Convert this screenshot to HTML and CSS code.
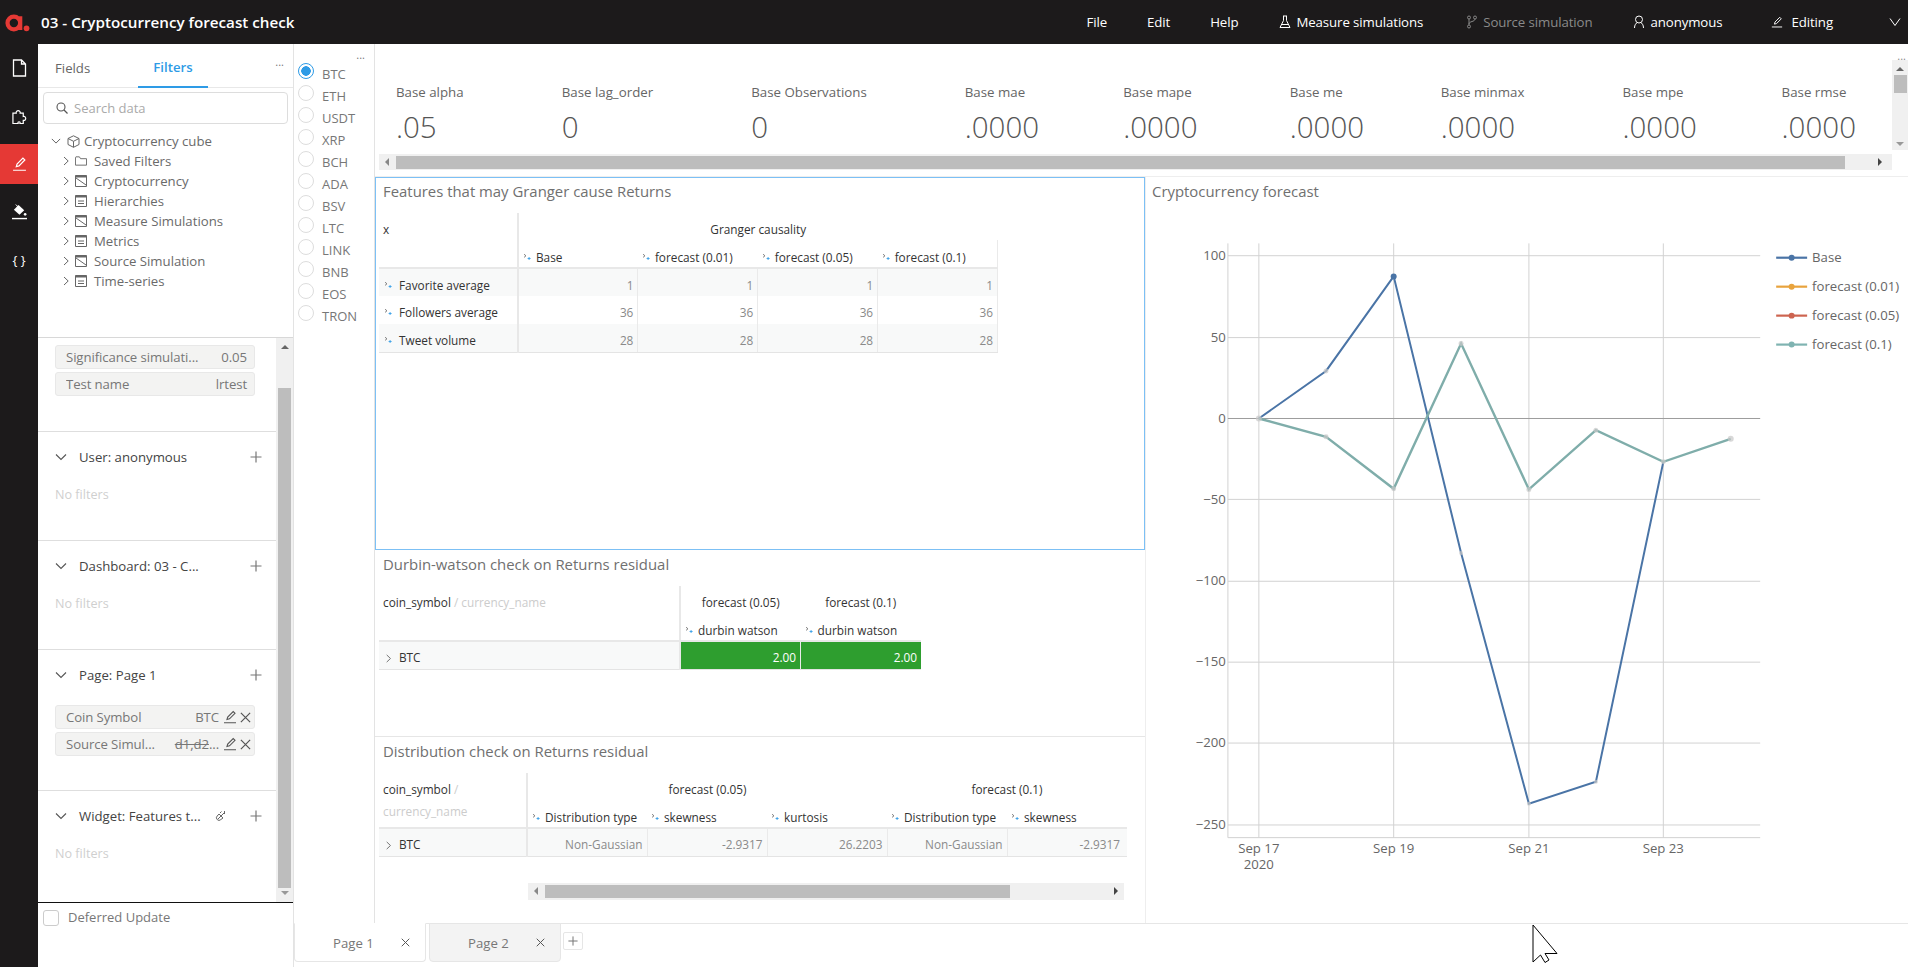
FILE: index.html
```html
<!DOCTYPE html>
<html lang="en">
<head>
<meta charset="utf-8">
<title>03 - Cryptocurrency forecast check</title>
<link rel="stylesheet" href="styles.css">
</head>
<body>
<svg class="sprite" xmlns="http://www.w3.org/2000/svg">
  <symbol id="i-exp" viewBox="0 0 8 8"><path d="M1 1.2 3 2.8 1 4.4" fill="none" stroke="#777" stroke-width=".9"/><path d="M4.6 5.5h3M6.1 4v3" stroke="#3aa0e8" stroke-width=".9"/></symbol>
  <symbol id="i-right" viewBox="0 0 10 10"><path d="M3 1l4.2 4L3 9" fill="none" stroke="#666" stroke-width="1"/></symbol>
  <symbol id="i-down" viewBox="0 0 12 12"><path d="M1 3.5l5 5 5-5" fill="none" stroke="#555" stroke-width="1.1"/></symbol>
  <symbol id="i-plus" viewBox="0 0 12 12"><path d="M6 .5v11M.5 6h11" stroke="#777" stroke-width="1.2"/></symbol>
  <symbol id="i-folder" viewBox="0 0 13 12"><path d="M.5 2.5V10.500h12v-7H6L4.800 1.500H1z" fill="none" stroke="#666"/></symbol>
  <symbol id="i-dim" viewBox="0 0 12 12"><path d="M.5.5h11v11H.5z" fill="#fff" stroke="#666"/><path d="M.5.5h11v2H.5z" fill="#666"/><path d="M1 3l10 7" stroke="#666"/></symbol>
  <symbol id="i-list" viewBox="0 0 12 12"><path d="M.5.5h11v11H.5z" fill="#fff" stroke="#666"/><path d="M.5.5h11v2H.5z" fill="#666"/><path d="M3 6h6M3 8.500h6" stroke="#666"/></symbol>
  <symbol id="i-pen" viewBox="0 0 14 14"><path d="M4 9.500l.7-2.500 5.500-5.500 1.800 1.800L6.500 8.800z M1 12.800h12" fill="none" stroke="currentColor" stroke-width="1.100"/></symbol>
  <symbol id="i-x" viewBox="0 0 10 10"><path d="M.8.800l8.400 8.400M9.200.800L.8 9.200" stroke="#555" stroke-width="1.100"/></symbol>
</svg>
<div class="app">
  <header class="topbar">
    <svg class="logo" viewBox="0 0 25 18"><path d="M16 3v13M16 9.500a6 6 0 1 1-12 0a6 6 0 1 1 12 0z" fill="none" stroke="#e53935" stroke-width="4"/><circle cx="22" cy="14.500" r="2.700" fill="#e53935"/></svg>
    <h1 class="doc-title">03 - Cryptocurrency forecast check</h1>
    <nav class="menu">
      <span>File</span><span>Edit</span><span class="menu-help">Help</span>
      <span class="menu-ico"><svg viewBox="0 0 12 14"><path d="M4 1h4M4.500 1v4.500L1 12.500h10L7.500 5.500V1M2.500 9.500h7" fill="none" stroke="#fff"/></svg>Measure simulations</span>
      <span class="menu-ico muted"><svg viewBox="0 0 12 14"><circle cx="3" cy="2.500" r="1.500" fill="none" stroke="#888"/><circle cx="9" cy="2.500" r="1.500" fill="none" stroke="#888"/><circle cx="3" cy="11.500" r="1.500" fill="none" stroke="#888"/><path d="M3 4v6M9 4c0 3-6 2-6 5" fill="none" stroke="#888"/></svg>Source simulation</span>
      <span class="menu-ico menu-user"><svg viewBox="0 0 12 14"><circle cx="6" cy="4.500" r="3.500" fill="none" stroke="#fff"/><path d="M1.500 13c0-3 1.500-5 3-5.500M10.500 13c0-3-1.500-5-3-5.500" fill="none" stroke="#fff"/></svg>anonymous</span>
      <span class="menu-ico menu-edit"><svg><use href="#i-pen"/></svg>Editing</span>
      <svg class="menu-chev" viewBox="0 0 12 12"><path d="M1 2.500l5 7 5-7" fill="none" stroke="#fff"/></svg>
    </nav>
  </header>
  <div class="main">
    <aside class="rail">
      <div class="rail-item"><svg viewBox="0 0 14 18"><path d="M1 1h8l4 4v12H1zM9 1v4h4" fill="none" stroke="#fff" stroke-width="1.300"/></svg></div>
      <div class="rail-item"><svg viewBox="0 0 16 18"><path d="M1 6h3.500c-.8-3.500 5-3.500 4.200 0H12v3.500c3.500-.8 3.500 5 0 4.200V17H8.500c.8-2.500-2.800-2.500-2 0H1z" fill="none" stroke="#fff" stroke-width="1.300"/></svg></div>
      <div class="rail-item active"><svg viewBox="0 0 14 14"><use href="#i-pen"/></svg></div>
      <div class="rail-item"><svg viewBox="0 0 16 18"><path d="M7 1.500l6 5.500-5 5-6-5.500z" fill="#fff"/><path d="M4 1l3 3" stroke="#fff"/><circle cx="14" cy="11.500" r="1.400" fill="#fff"/><path d="M0 16h16" stroke="#fff" stroke-width="1.500"/></svg></div>
      <div class="rail-item rail-code">{ }</div>
    </aside>
    <aside class="sidebar">
      <div class="side-tabs">
        <span class="side-tab">Fields</span>
        <span class="side-tab on">Filters</span>
        <span class="dots">...</span>
      </div>
      <div class="search">
        <svg viewBox="0 0 12 12"><circle cx="5" cy="5" r="4" fill="none" stroke="#555" stroke-width="1.100"/><path d="M8 8l3.500 3.500" stroke="#555" stroke-width="1.200"/></svg>
        <span>Search data</span>
      </div>
      <ul class="tree">
        <li class="tree-root"><svg class="tw"><use href="#i-down"/></svg><svg class="ti" viewBox="0 0 13 13"><path d="M6.500 .8l5.500 2.700v6L6.500 12.300 1 9.500v-6zM1 3.500l5.500 2.800 5.500-2.800M6.500 6.300v6" fill="none" stroke="#666"/></svg>Cryptocurrency cube</li>
        <li><svg class="tw"><use href="#i-right"/></svg><svg class="ti"><use href="#i-folder"/></svg>Saved Filters</li>
        <li><svg class="tw"><use href="#i-right"/></svg><svg class="ti"><use href="#i-dim"/></svg>Cryptocurrency</li>
        <li><svg class="tw"><use href="#i-right"/></svg><svg class="ti"><use href="#i-list"/></svg>Hierarchies</li>
        <li><svg class="tw"><use href="#i-right"/></svg><svg class="ti"><use href="#i-dim"/></svg>Measure Simulations</li>
        <li><svg class="tw"><use href="#i-right"/></svg><svg class="ti"><use href="#i-list"/></svg>Metrics</li>
        <li><svg class="tw"><use href="#i-right"/></svg><svg class="ti"><use href="#i-dim"/></svg>Source Simulation</li>
        <li><svg class="tw"><use href="#i-right"/></svg><svg class="ti"><use href="#i-list"/></svg>Time-series</li>
      </ul>
      <div class="filters">
        <div class="filter-stack">
          <section class="fsec fsec-top">
            <div class="chip"><span class="chip-name">Significance simulati...</span><span class="chip-val">0.05</span></div>
            <div class="chip"><span class="chip-name">Test name</span><span class="chip-val">lrtest</span></div>
          </section>
          <section class="fsec">
            <div class="fhead"><svg class="fchev"><use href="#i-down"/></svg><span class="ftitle">User: anonymous</span><svg class="fplus"><use href="#i-plus"/></svg></div>
            <p class="nofilters">No filters</p>
          </section>
          <section class="fsec">
            <div class="fhead"><svg class="fchev"><use href="#i-down"/></svg><span class="ftitle">Dashboard: 03 - C...</span><svg class="fplus"><use href="#i-plus"/></svg></div>
            <p class="nofilters">No filters</p>
          </section>
          <section class="fsec fsec-page">
            <div class="fhead"><svg class="fchev"><use href="#i-down"/></svg><span class="ftitle">Page: Page 1</span><svg class="fplus"><use href="#i-plus"/></svg></div>
            <div class="chips">
              <div class="chip"><span class="chip-name">Coin Symbol</span><span class="chip-val">BTC</span><svg class="chip-ico"><use href="#i-pen"/></svg><svg class="chip-x"><use href="#i-x"/></svg></div>
              <div class="chip"><span class="chip-name">Source Simul...</span><span class="chip-val strike"><s>d1,d2</s>...</span><svg class="chip-ico"><use href="#i-pen"/></svg><svg class="chip-x"><use href="#i-x"/></svg></div>
            </div>
          </section>
          <section class="fsec fsec-last">
            <div class="fhead"><svg class="fchev"><use href="#i-down"/></svg><span class="ftitle">Widget: Features t...</span><svg class="funlink" viewBox="0 0 12 12"><path d="M3 9l6-6M4 4l-1.800 2a2 2 0 0 0 3.600 3.600L8 8l-4-4zM5 3l1.500-1.500M9.500 1v3" fill="none" stroke="#666"/></svg><svg class="fplus"><use href="#i-plus"/></svg></div>
            <p class="nofilters">No filters</p>
          </section>
        </div>
        <div class="vbar vbar-side"><i class="tri up"></i><b class="vthumb"></b><i class="tri down"></i></div>
      </div>
      <label class="deferred"><span class="check"></span>Deferred Update</label>
    </aside>
    <div class="workspace">
      <div class="canvas">
        <div class="radios">
          <span class="dots">...</span>
          <div class="radio on"><i></i>BTC</div>
          <div class="radio"><i></i>ETH</div>
          <div class="radio"><i></i>USDT</div>
          <div class="radio"><i></i>XRP</div>
          <div class="radio"><i></i>BCH</div>
          <div class="radio"><i></i>ADA</div>
          <div class="radio"><i></i>BSV</div>
          <div class="radio"><i></i>LTC</div>
          <div class="radio"><i></i>LINK</div>
          <div class="radio"><i></i>BNB</div>
          <div class="radio"><i></i>EOS</div>
          <div class="radio"><i></i>TRON</div>
        </div>
        <div class="report">
          <div class="kpis">
            <div class="kpi-body">
              <div class="kpi-row">
                <div class="kpi"><span class="kpi-label">Base alpha</span><span class="kpi-val">.05</span></div>
                <div class="kpi"><span class="kpi-label">Base lag_order</span><span class="kpi-val">0</span></div>
                <div class="kpi"><span class="kpi-label">Base Observations</span><span class="kpi-val">0</span></div>
                <div class="kpi"><span class="kpi-label">Base mae</span><span class="kpi-val">.0000</span></div>
                <div class="kpi"><span class="kpi-label">Base mape</span><span class="kpi-val">.0000</span></div>
                <div class="kpi"><span class="kpi-label">Base me</span><span class="kpi-val">.0000</span></div>
                <div class="kpi"><span class="kpi-label">Base minmax</span><span class="kpi-val">.0000</span></div>
                <div class="kpi"><span class="kpi-label">Base mpe</span><span class="kpi-val">.0000</span></div>
                <div class="kpi"><span class="kpi-label">Base rmse</span><span class="kpi-val">.0000</span></div>
              </div>
              <div class="hbar hbar-kpi"><i class="tri left"></i><b class="hthumb"></b><i class="tri right"></i></div>
            </div>
            <div class="kpi-side">
              <span class="dots">...</span>
              <div class="vbar vbar-kpi"><i class="tri up"></i><b class="vthumb"></b><i class="tri down"></i></div>
            </div>
          </div>
          <div class="dash">
            <div class="dash-left">
              <section class="widget w-granger">
                <h2 class="w-title">Features that may Granger cause Returns</h2>
                <table class="pivot t-granger">
                  <tr class="top"><th class="corner" rowspan="2">x</th><th class="center" colspan="4">Granger causality</th></tr>
                  <tr class="leaf"><th><svg class="exp"><use href="#i-exp"/></svg>Base</th><th><svg class="exp"><use href="#i-exp"/></svg>forecast (0.01)</th><th><svg class="exp"><use href="#i-exp"/></svg>forecast (0.05)</th><th><svg class="exp"><use href="#i-exp"/></svg>forecast (0.1)</th></tr>
                  <tr class="odd"><th class="rowh"><svg class="exp"><use href="#i-exp"/></svg>Favorite average</th><td>1</td><td>1</td><td>1</td><td>1</td></tr>
                  <tr><th class="rowh"><svg class="exp"><use href="#i-exp"/></svg>Followers average</th><td>36</td><td>36</td><td>36</td><td>36</td></tr>
                  <tr class="odd last"><th class="rowh"><svg class="exp"><use href="#i-exp"/></svg>Tweet volume</th><td>28</td><td>28</td><td>28</td><td>28</td></tr>
                </table>
              </section>
              <section class="widget w-durbin">
                <h2 class="w-title">Durbin-watson check on Returns residual</h2>
                <table class="pivot t-durbin">
                  <tr class="top"><th class="corner" rowspan="2">coin_symbol <em>/ currency_name</em></th><th class="center">forecast (0.05)</th><th class="center">forecast (0.1)</th></tr>
                  <tr class="leaf"><th><svg class="exp"><use href="#i-exp"/></svg>durbin watson</th><th><svg class="exp"><use href="#i-exp"/></svg>durbin watson</th></tr>
                  <tr class="odd last"><th class="rowh"><svg class="chev"><use href="#i-right"/></svg>BTC</th><td class="good">2.00</td><td class="good">2.00</td></tr>
                </table>
              </section>
              <section class="widget w-dist">
                <h2 class="w-title">Distribution check on Returns residual</h2>
                <table class="pivot t-dist">
                  <tr class="top"><th class="corner">coin_symbol <em>/</em></th><th class="center" colspan="3">forecast (0.05)</th><th class="center" colspan="2">forecast (0.1)</th></tr>
                  <tr class="leaf"><th class="corner2"><em>currency_name</em></th><th><svg class="exp"><use href="#i-exp"/></svg>Distribution type</th><th><svg class="exp"><use href="#i-exp"/></svg>skewness</th><th><svg class="exp"><use href="#i-exp"/></svg>kurtosis</th><th><svg class="exp"><use href="#i-exp"/></svg>Distribution type</th><th><svg class="exp"><use href="#i-exp"/></svg>skewness</th></tr>
                  <tr class="odd last"><th class="rowh"><svg class="chev"><use href="#i-right"/></svg>BTC</th><td>Non-Gaussian</td><td>-2.9317</td><td>26.2203</td><td>Non-Gaussian</td><td>-2.9317</td></tr>
                </table>
                <div class="hbar hbar-dist"><i class="tri left"></i><b class="hthumb"></b><i class="tri right"></i></div>
              </section>
            </div>
            <section class="chart">
              <h2 class="w-title">Cryptocurrency forecast</h2>
              <svg class="plot" viewBox="1146 205 762 718">
                <g class="grid">
                  <path d="M1228 255.300H1761M1228 337.300H1761M1228 499.300H1761M1228 581.300H1761M1228 662.300H1761M1228 743.300H1761M1228 825.300H1761"/>
                  <path d="M1259 243V838M1394 243V838M1529.400 243V838M1664 243V838"/>
                  <path d="M1228 243V838H1761"/>
                </g>
                <path class="zero" d="M1228 418.300H1761"/>
                <polyline class="s-base" points="1259,418.300 1326.300,370.700 1394,276 1461.500,553 1529.400,804 1596.500,782 1664,461.700"/>
                <polyline class="s-fc" points="1259,418.300 1326.300,436.700 1394,488.700 1461.500,343.300 1529.400,489.300 1596.500,430 1664,461.700 1731.500,438.700"/>
                <g class="pale">
                  <circle cx="1259" cy="418.300" r="3"/><circle cx="1326.300" cy="370.700" r="2.500"/><circle cx="1326.300" cy="436.700" r="2.500"/><circle cx="1394" cy="488.700" r="2.500"/><circle cx="1461.500" cy="343.300" r="2.500"/><circle cx="1461.500" cy="553" r="2"/><circle cx="1529.400" cy="489.300" r="2.500"/><circle cx="1529.400" cy="804" r="2"/><circle cx="1596.500" cy="430" r="2.500"/><circle cx="1596.500" cy="782" r="2"/><circle cx="1664" cy="461.700" r="2.500"/><circle cx="1731.500" cy="438.700" r="3"/>
                </g>
                <circle class="dot-base" cx="1394" cy="276" r="3"/>
                <g class="ticks ty">
                  <text x="1226" y="259.500">100</text><text x="1226" y="341.500">50</text><text x="1226" y="422.500">0</text><text x="1226" y="503.500">−50</text><text x="1226" y="585.500">−100</text><text x="1226" y="666.500">−150</text><text x="1226" y="747.500">−200</text><text x="1226" y="829.500">−250</text>
                </g>
                <g class="ticks tx">
                  <text x="1259" y="853">Sep 17</text><text x="1259" y="869">2020</text><text x="1394" y="853">Sep 19</text><text x="1529.400" y="853">Sep 21</text><text x="1664" y="853">Sep 23</text>
                </g>
                <g class="legend">
                  <path class="lg-a" d="M1777 257.300H1808"/><circle class="lgd-a" cx="1792.500" cy="257.300" r="3"/><text x="1813" y="262">Base</text>
                  <path class="lg-b" d="M1777 286.300H1808"/><circle class="lgd-b" cx="1792.500" cy="286.300" r="3"/><text x="1813" y="291">forecast (0.01)</text>
                  <path class="lg-c" d="M1777 315.300H1808"/><circle class="lgd-c" cx="1792.500" cy="315.300" r="3"/><text x="1813" y="320">forecast (0.05)</text>
                  <path class="lg-d" d="M1777 344.300H1808"/><circle class="lgd-d" cx="1792.500" cy="344.300" r="3"/><text x="1813" y="349">forecast (0.1)</text>
                </g>
              </svg>
            </section>
          </div>
        </div>
      </div>
      <div class="tabs">
        <div class="tab on"><span>Page 1</span><svg class="tab-x"><use href="#i-x"/></svg></div>
        <div class="tab"><span>Page 2</span><svg class="tab-x"><use href="#i-x"/></svg></div>
        <div class="tab-add"><svg viewBox="0 0 12 12"><use href="#i-plus"/></svg></div>
      </div>
    </div>
  </div>
  <svg class="cursor" viewBox="0 0 26 39"><path d="M1 1V38L8.500 31L13 38.500L17 36L13 29.500H25z" fill="#fff" stroke="#000"/></svg>
</div>
</body>
</html>
```
FILE: styles.css
```css
* { box-sizing: border-box; }
html, body { margin: 0; height: 100%; overflow: hidden; background: #fff; }
body { font-family: "Open Sans", "Noto Sans", sans-serif; font-size: 12px; color: #666; }
.sprite { display: none; }
svg { display: block; }
h1, h2, p, ul { margin: 0; padding: 0; }
.app { position: relative; width: 1908px; height: 967px; display: flex; flex-direction: column; overflow: hidden; }

/* top bar */
.topbar { height: 44px; flex: none; background: #1c1a1b; display: flex; align-items: center; color: #fff; padding: 0 7px 0 3px; }
.logo { width: 27px; height: 19px; margin-right: 11px; }
.doc-title { font-size: 15.2px; font-weight: 600; color: #fff; }
.menu { margin-left: auto; display: flex; align-items: center; gap: 40px; font-size: 13.25px; letter-spacing: -.1px; }
.menu-ico { display: flex; align-items: center; gap: 5px; }
.menu-ico svg { width: 12px; height: 14px; }
.muted { color: #8a8a8a; margin-left: 3px; }
.menu-help { margin-right: 1px; }
.menu-user { margin-left: 1px; }
.menu-edit { margin-left: 9px; gap: 8px; }
.menu-chev { width: 12px; height: 12px; margin-left: 16px; }

/* layout */
.main { flex: 1; display: flex; min-height: 0; }
.rail { width: 38px; flex: none; background: #1c1a1b; display: flex; flex-direction: column; color: #fff; }
.rail-item { height: 40px; margin: 4px 0; display: flex; align-items: center; justify-content: center; }
.rail-item svg { width: 15px; height: 18px; }
.rail-item.active { background: #e53935; }
.rail-code { font-size: 13px; }
.sidebar { width: 256px; flex: none; border-right: 1px solid #e3e3e3; display: flex; flex-direction: column; }
.workspace { flex: 1; display: flex; flex-direction: column; min-width: 0; }
.canvas { flex: 1; display: flex; min-height: 0; }

/* sidebar */
.side-tabs { height: 44px; flex: none; display: flex; align-items: flex-start; position: relative; border-bottom: 1px solid #e8e8e8; }
.side-tab { height: 44px; padding-top: 3px; display: flex; align-items: center; font-size: 13.2px; color: #666; }
.side-tab:first-child { justify-content: flex-start; padding-left: 17px; width: 100px; }
.side-tab.on { width: 70px; justify-content: center; color: #2e9be6; font-weight: 600; border-bottom: 2px solid #2e9be6; }
.dots { color: #777; letter-spacing: 0; font-size: 11px; line-height: 6px; position: absolute; }
.side-tabs .dots { right: 9px; top: 15px; }
.search { margin: 4px 5px 0; height: 32px; border: 1px solid #ddd; border-radius: 4px; display: flex; align-items: center; padding-left: 12px; gap: 6px; color: #aaa; font-size: 13px; flex: none; }
.search svg { width: 12px; height: 12px; }
.tree { list-style: none; flex: none; height: 214px; padding-top: 7px; font-size: 13.2px; color: #6a6a6a; border-bottom: 1px solid #d8d8d8; }
.tree li { height: 20px; display: flex; align-items: center; padding-left: 23px; }
.tree li.tree-root { padding-left: 13px; }
.tw { width: 10px; height: 10px; margin-right: 4px; }
.tree-root .tw { margin-right: 6px; }
.ti { width: 12px; height: 12px; margin-right: 7px; }
.tree-root .ti { width: 13px; height: 13px; margin-right: 4px; }

.filters { flex: 1; min-height: 0; display: flex; }
.filter-stack { width: 238px; flex: none; }
.vbar { background: #f0f0f0; display: flex; flex-direction: column; align-items: center; }
.vbar-side { width: 17px; padding: 7px 2px 7px; }
.vthumb { display: block; background: #bdbdbd; width: 13px; }
.vbar-side .vthumb { flex: 1; margin: 39px 0 3px; }
.tri { display: block; width: 0; height: 0; border-style: solid; border-color: transparent; flex: none; }
.tri.up { border-width: 0 4px 4px; border-bottom-color: #666; }
.tri.down { border-width: 4px 4px 0; border-top-color: #999; }
.tri.left { border-width: 4px 4px 4px 0; border-right-color: #888; }
.tri.right { border-width: 4px 0 4px 4px; border-left-color: #444; }
.fsec { height: 109px; border-bottom: 1px solid #dedede; padding-left: 17px; padding-right: 14px; }
.fsec-top { height: 94px; padding-top: 7px; }
.fsec-page { height: 141px; }
.fsec-last { height: 110px; border-bottom: 0; }
.chip { height: 24px; margin-bottom: 3px; background: #f3f3f2; border: 1px solid #e8e8e8; border-radius: 3px; display: flex; align-items: center; padding: 0 7px 0 10px; font-size: 13.2px; letter-spacing: -.1px; color: #777; width: 200px; }
.chip-name { flex: 1; white-space: nowrap; overflow: hidden; }
.chip-ico { width: 14px; height: 14px; margin-left: 4px; color: #555; }
.chip-x { width: 11px; height: 11px; margin: 0 -4px 0 3px; }
.chips { margin-top: 5px; }
.fhead { height: 50px; display: flex; align-items: center; font-size: 13.2px; color: #444; }
.fchev { width: 12px; height: 12px; margin: 0 12px 0 0; }
.ftitle { flex: 1; white-space: nowrap; }
.fplus { width: 12px; height: 12px; }
.funlink { width: 12px; height: 12px; margin-right: 23px; }
.nofilters { color: #cfcfcf; font-size: 12.6px; margin-top: 4px; }
.deferred { height: 65px; flex: none; border-top: 1px solid #111; display: flex; align-items: flex-start; padding: 7px 0 0 5px; gap: 9px; font-size: 13px; line-height: 15px; color: #777; }
.check { width: 16px; height: 16px; border: 1px solid #ccc; border-radius: 3px; }

/* radios */
.radios { width: 81px; flex: none; border-right: 1px solid #e3e3e3; padding: 19px 0 0 4px; position: relative; font-size: 13px; color: #777; }
.radios .dots { right: 9px; top: 8px; }
.radio { height: 22px; display: flex; align-items: center; gap: 8px; }
.radio i { width: 16px; height: 16px; border: 1px solid #ddd; border-radius: 50%; flex: none; margin-top: -7px; }
.radio.on i { border-color: #2e9be6; background: radial-gradient(circle, #2e9be6 0 4.5px, #fff 5px); }

/* report */
.report { flex: 1; min-width: 0; display: flex; flex-direction: column; }
.kpis { height: 133px; flex: none; display: flex; border-bottom: 1px solid #eee; }
.kpi-body { flex: 1; min-width: 0; display: flex; flex-direction: column; padding-bottom: 6px; }
.kpi-row { flex: 1; display: flex; gap: 98px; padding: 40px 0 0 21px; }
.kpi { display: flex; flex-direction: column; flex: none; }
.kpi-label { font-size: 13.3px; color: #666; height: 16px; line-height: 16px; white-space: nowrap; }
.kpi-val { width: 0; font-size: 29.5px; font-weight: 300; color: #555; line-height: 38px; margin-top: 8px; white-space: nowrap; }
.hbar { background: #f0f0f0; display: flex; align-items: center; height: 16px; flex: none; }
.hthumb { display: block; background: #bdbdbd; height: 13px; }
.hbar-kpi { margin-left: 4px; padding: 0 10px 0 6px; }
.hbar-kpi .hthumb { width: 1449px; margin: 0 auto 0 7px; }
.kpi-side { width: 16px; flex: none; position: relative; }
.kpi-side .dots { right: 2px; top: 9px; color: #888; }
.vbar-kpi { margin-top: 16px; height: 90px; padding: 7px 0 4px; }
.vbar-kpi .vthumb { width: 13px; height: 18px; margin: 4px 0 auto; }

.dash { flex: 1; min-height: 0; display: flex; }
.dash-left { width: 770px; flex: none; display: flex; flex-direction: column; }
.widget { padding: 0 0 0 4px; border-bottom: 1px solid #e6e6e6; }
.w-title { font-size: 14.9px; font-weight: 400; color: #707070; line-height: 28px; height: 36px; padding: 0 0 0 4px; white-space: nowrap; }
.w-granger { height: 373px; border: 1px solid #7cc0f5; padding-left: 3px; }
.w-granger .w-title { line-height: 26px; height: 35px; }
.w-durbin { height: 187px; }
.w-dist { height: 186px; border-bottom: 0; }

.pivot { border-collapse: collapse; table-layout: fixed; font-size: 11.8px; color: #333; }
.pivot th, .pivot td { height: 28px; padding: 4px 4px 0; font-weight: 400; white-space: nowrap; text-align: left; overflow: hidden; }
.pivot td { text-align: right; color: #8a8a8a; border-left: 1px solid #eaeaea; background-clip: padding-box; }
.pivot th { color: #333; }
.pivot em { font-style: normal; color: #ccc; }
.pivot .center { text-align: center; }
.pivot .corner, .pivot .rowh, .pivot .corner2 { border-right: 2px solid #e8e8e8; }
.pivot .corner { vertical-align: top; line-height: 22px; padding-top: 5px; }
.pivot .top th { height: 27px; padding-top: 5px; }
.pivot .leaf th { height: 28px; padding: 6px 0 0 4px; border-bottom: 2px solid #e8e8e8; }
.pivot .leaf .corner2 { padding-left: 4px; padding-top: 2px; vertical-align: top; line-height: 18px; }
.pivot .corner[rowspan] { border-bottom: 2px solid #e8e8e8; }
.pivot .rowh { padding-left: 4px; }
.pivot .odd th, .pivot .odd td { background-color: #f8f9f9; }
.pivot .last th, .pivot .last td { border-bottom: 1px solid #e4e4e4; }
.pivot td.good { background-color: #2e9e2f; color: #fff; }
.exp { width: 8px; height: 8px; display: inline-block; margin: 0 5px 3px 0; vertical-align: middle; }
.rowh .exp { margin-left: 1px; margin-right: 7px; }
.chev { width: 9px; height: 9px; display: inline-block; vertical-align: middle; margin: 0 6px 1px 1px; }
.t-granger { width: 619px; margin-top: 0; }
.t-granger th:first-child, .t-granger td:first-child { width: 139px; }
.t-granger .leaf th, .t-granger td { width: 120px; }
.t-granger tr.leaf th:first-child { width: 120px; }
.t-granger td:last-child, .t-granger .leaf th:last-child { border-right: 1px solid #eaeaea; }
.t-durbin { width: 542px; }
.t-durbin .corner, .t-durbin .rowh { width: 301px; }
.t-dist { width: 748px; }
.t-dist .corner, .t-dist .rowh, .t-dist .corner2 { width: 148px; }
.t-dist td { width: 120px; }
.t-dist td:last-child { padding-right: 7px; }
.t-dist tr.leaf th { width: 120px; }
.t-dist tr.leaf th.corner2 { width: 148px; }
.hbar-dist { width: 596px; height: 17px; margin: 26px 0 0 149px; padding: 0 6px 0 6px; }
.hbar-dist .hthumb { width: 465px; margin: 0 auto 0 7px; }

/* chart */
.chart { flex: 1; min-width: 0; border-left: 1px solid #eee; }
.chart .w-title { height: 28px; padding-left: 6px; }
.plot { width: 761px; height: 718px; }
.grid path { fill: none; stroke: #d2d2d2; stroke-width: 1; }
.zero { fill: none; stroke: #9c9c9c; stroke-width: 1; }
.s-base { fill: none; stroke: #4a74a6; stroke-width: 2; }
.s-fc { fill: none; stroke: #7fadaa; stroke-width: 2.4; }
.pale circle { fill: #c8c8c8; opacity: .7; }
.dot-base { fill: #4a74a6; }
.ticks text, .legend text { font-family: "Open Sans", sans-serif; font-size: 13.2px; fill: #666; }
.ty text { text-anchor: end; }
.tx text { text-anchor: middle; }
.lg-a, .lg-b, .lg-c, .lg-d { fill: none; stroke-width: 2.2; }
.lg-a { stroke: #4a74a6; } .lgd-a { fill: #4a74a6; }
.lg-b { stroke: #e8a33d; } .lgd-b { fill: #e8a33d; }
.lg-c { stroke: #cd6450; } .lgd-c { fill: #cd6450; }
.lg-d { stroke: #7fb3b1; } .lgd-d { fill: #7fb3b1; }

/* tabs */
.tabs { height: 44px; flex: none; border-top: 1px solid #e6e6e6; display: flex; gap: 3px; align-items: flex-start; }
.tab { width: 132px; height: 39px; margin-top: -1px; border: 1px solid #e6e6e6; border-radius: 0 0 4px 4px; background: #f3f3f3; display: flex; align-items: center; padding-left: 38px; font-size: 13.2px; color: #777; position: relative; }
.tab.on { background: #fff; border-top-color: #fff; }
.tab span { flex: 1; }
.tab-x { width: 9px; height: 9px; margin-right: 15px; }
.tab-add { width: 20px; height: 18px; border: 1px solid #e6e6e6; border-radius: 2px; margin: 8px 0 0 -1px; display: flex; align-items: center; justify-content: center; }
.tab-add svg { width: 10px; height: 10px; }
.cursor { position: absolute; left: 1532px; top: 924px; width: 26px; height: 39px; }
```
